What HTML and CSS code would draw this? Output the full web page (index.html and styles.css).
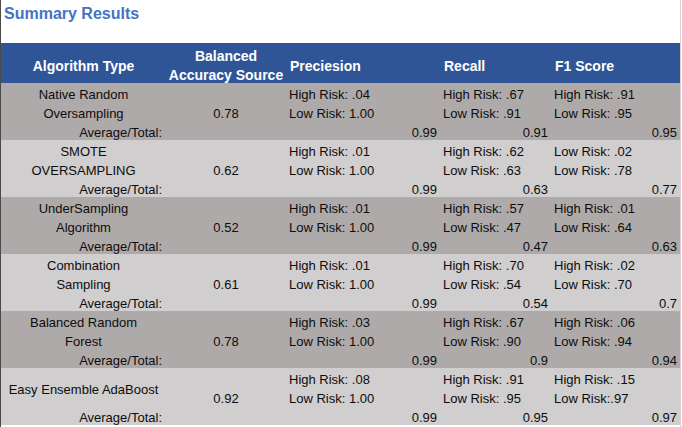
FILE: index.html
```html
<!DOCTYPE html>
<html>
<head>
<meta charset="utf-8">
<link rel="stylesheet" href="styles.css">
</head>
<body>
<div class="sheet">
  <div class="title-area"><h1 class="title">Summary Results</h1></div>
  <div class="row head">
    <div class="hc center">Algorithm Type</div>
    <div class="hc center two">Balanced<br>Accuracy Source</div>
    <div class="hc">Preciesion</div>
    <div class="hc">Recall</div>
    <div class="hc">F1 Score</div>
  </div>

  <div class="row group dark">
    <div class="name">Native Random<br>Oversampling</div>
    <div class="avg">Average/Total:</div>
    <div class="bal">0.78</div>
    <div class="c3 l1">High Risk: .04</div><div class="c3 l2">Low Risk: 1.00</div><div class="c3 l3">0.99</div>
    <div class="c4 l1">High Risk: .67</div><div class="c4 l2">Low Risk: .91</div><div class="c4 l3">0.91</div>
    <div class="c5 l1">High Risk: .91</div><div class="c5 l2">Low Risk: .95</div><div class="c5 l3">0.95</div>
  </div>

  <div class="row group light">
    <div class="name">SMOTE<br>OVERSAMPLING</div>
    <div class="avg">Average/Total:</div>
    <div class="bal">0.62</div>
    <div class="c3 l1">High Risk: .01</div><div class="c3 l2">Low Risk: 1.00</div><div class="c3 l3">0.99</div>
    <div class="c4 l1">High Risk: .62</div><div class="c4 l2">Low Risk: .63</div><div class="c4 l3">0.63</div>
    <div class="c5 l1">Low Risk: .02</div><div class="c5 l2">Low Risk: .78</div><div class="c5 l3">0.77</div>
  </div>

  <div class="row group dark">
    <div class="name">UnderSampling<br>Algorithm</div>
    <div class="avg">Average/Total:</div>
    <div class="bal">0.52</div>
    <div class="c3 l1">High Risk: .01</div><div class="c3 l2">Low Risk: 1.00</div><div class="c3 l3">0.99</div>
    <div class="c4 l1">High Risk: .57</div><div class="c4 l2">Low Risk: .47</div><div class="c4 l3">0.47</div>
    <div class="c5 l1">High Risk: .01</div><div class="c5 l2">Low Risk: .64</div><div class="c5 l3">0.63</div>
  </div>

  <div class="row group light">
    <div class="name">Combination<br>Sampling</div>
    <div class="avg">Average/Total:</div>
    <div class="bal">0.61</div>
    <div class="c3 l1">High Risk: .01</div><div class="c3 l2">Low Risk: 1.00</div><div class="c3 l3">0.99</div>
    <div class="c4 l1">High Risk: .70</div><div class="c4 l2">Low Risk: .54</div><div class="c4 l3">0.54</div>
    <div class="c5 l1">High Risk: .02</div><div class="c5 l2">Low Risk: .70</div><div class="c5 l3">0.7</div>
  </div>

  <div class="row group dark">
    <div class="name">Balanced Random<br>Forest</div>
    <div class="avg">Average/Total:</div>
    <div class="bal">0.78</div>
    <div class="c3 l1">High Risk: .03</div><div class="c3 l2">Low Risk: 1.00</div><div class="c3 l3">0.99</div>
    <div class="c4 l1">High Risk: .67</div><div class="c4 l2">Low Risk: .90</div><div class="c4 l3">0.9</div>
    <div class="c5 l1">High Risk: .06</div><div class="c5 l2">Low Risk: .94</div><div class="c5 l3">0.94</div>
  </div>

  <div class="row group light">
    <div class="name">Easy Ensemble AdaBoost</div>
    <div class="avg">Average/Total:</div>
    <div class="bal">0.92</div>
    <div class="c3 l1">High Risk: .08</div><div class="c3 l2">Low Risk: 1.00</div><div class="c3 l3">0.99</div>
    <div class="c4 l1">High Risk: .91</div><div class="c4 l2">Low Risk: .95</div><div class="c4 l3">0.95</div>
    <div class="c5 l1">High Risk: .15</div><div class="c5 l2">Low Risk:.97</div><div class="c5 l3">0.97</div>
  </div>
</div>
</body>
</html>
```

FILE: styles.css
```css
html, body {
  margin: 0;
  padding: 0;
  background: #ffffff;
}

body {
  width: 682px;
  height: 427px;
  overflow: hidden;
  font-family: "Liberation Sans", Arial, sans-serif;
  font-size: 13px;
  color: #0d0d0d;
}

.sheet {
  width: 681px;
  height: 427px;
  border-left: 1px solid #4a4a4a;
  border-right: 1px solid #d6d6d6;
  box-sizing: border-box;
}

.title-area {
  height: 43px;
  box-sizing: border-box;
  padding: 4px 0 0 3px;
}

.title {
  margin: 0;
  font-size: 16px;
  line-height: 20px;
  font-weight: bold;
  color: #4472c4;
}

.row {
  display: grid;
  grid-template-columns: 165px 120px 154px 111px 129px;
}

.head {
  height: 40px;
  background: #2f5597;
  color: #ffffff;
  font-weight: bold;
  font-size: 14px;
}

.hc {
  display: flex;
  align-items: center;
  box-sizing: border-box;
  padding: 4px 0 0 4px;
  line-height: 19px;
  white-space: nowrap;
}

.hc.center {
  justify-content: center;
  text-align: center;
  padding-left: 0;
}

.group {
  grid-template-rows: 19px 19px 19px;
  line-height: 19px;
}

.group > div {
  box-sizing: border-box;
  padding-top: 2px;
}

.dark {
  background: #aeaaaa;
}

.light {
  background: #d0cece;
}

.group > .name {
  grid-column: 1;
  grid-row: 1 / 3;
  display: flex;
  align-items: center;
  justify-content: center;
  text-align: center;
  white-space: nowrap;
  padding-top: 4px;
}

.avg {
  grid-column: 1;
  grid-row: 3;
  text-align: right;
  padding-right: 4px;
}

.group > .bal {
  grid-column: 2;
  grid-row: 1 / 4;
  display: flex;
  align-items: center;
  justify-content: center;
  padding-top: 4px;
}

.c3 { grid-column: 3; }
.c4 { grid-column: 4; }
.c5 { grid-column: 5; }

.l1, .l2 {
  padding-left: 3px;
  white-space: nowrap;
}

.l1 { grid-row: 1; }
.l2 { grid-row: 2; }

.l3 {
  grid-row: 3;
  text-align: right;
  padding-right: 3px;
}
```
